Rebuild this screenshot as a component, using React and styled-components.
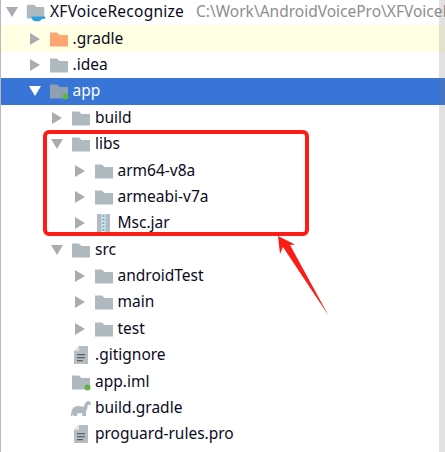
import styled, { createGlobalStyle } from "styled-components";

const GlobalStyle = createGlobalStyle`
  html, body {
    margin: 0;
    padding: 0;
    background: #fff;
    overflow: hidden;
  }
`;

const Panel = styled.div`
  position: relative;
  width: 445px;
  height: 452px;
  overflow: hidden;
  background: #fff;
  border-left: 1px solid #b9b9b9;
  box-sizing: border-box;
  font-family: "Noto Sans", "Open Sans", sans-serif;
  font-size: 15.5px;
  color: #0a0a1e;
`;

const Tree = styled.div`
  margin-top: -1px;
`;

const Row = styled.div`
  display: flex;
  align-items: center;
  height: 26.4px;
  padding-left: ${(p) => 4 + p.$depth * 22.5}px;
  white-space: nowrap;
  background: ${(p) => (p.$selected ? "#3875d7" : p.$ignored ? "#ffffe4" : "transparent")};
  color: ${(p) => (p.$selected ? "#fff" : "inherit")};
`;

const Toggle = styled.span`
  display: flex;
  justify-content: center;
  width: 14px;
  flex: none;
`;

const IconSlot = styled.span`
  display: flex;
  justify-content: center;
  width: 22px;
  margin-left: 6px;
  flex: none;
`;

const Name = styled.span`
  margin-left: 3px;
  line-height: 26px;
  position: relative;
  top: -1px;
  letter-spacing: ${(p) => (p.$root ? "0.25px" : "0")};
`;

const Path = styled.span`
  margin-left: 12px;
  color: #8e8e8e;
  position: relative;
  top: -1px;
`;

const Scrollbar = styled.div`
  position: absolute;
  top: 0;
  right: 0;
  width: 6px;
  height: 100%;
  background: rgba(120, 120, 120, 0.22);
`;

const Highlight = styled.div`
  position: absolute;
  left: 42px;
  top: 130px;
  width: 266px;
  height: 106px;
  box-sizing: border-box;
  border: 4px solid #fb1c16;
  border-radius: 6px;
`;

const ArrowMark = styled.svg`
  position: absolute;
  left: 268px;
  top: 230px;
`;

const Arrow = ({ open, selected }) => (
  <svg width="14" height="14" viewBox="0 0 14 14">
    <path
      d={open ? "M1 2h12L7 12z" : "M2 1l10 6-10 6z"}
      fill={selected ? "#fff" : "#a9adb1"}
    />
  </svg>
);

const Folder = ({ color = "#aeb9c0", module }) => (
  <svg width="22" height="18" viewBox="0 0 22 18">
    <path d="M2 2.500h7l2.500 2.500H20v11.500H2z" fill={color} />
    {module && <circle cx="17.500" cy="14.500" r="3" fill="#62b543" />}
  </svg>
);

const ProjectFolder = () => (
  <svg width="24" height="24" viewBox="0 0 24 24">
    <path d="M2 4h8l2.500 2.500H21V19H2z" fill="#aeb9c0" />
    <path d="M7 17h12c0 3-2 5-4 5h-4c-2 0-4-2-4-5z" fill="#2f9fdc" />
    <path d="M18 17h4v2.500h-4z" fill="#2f9fdc" />
  </svg>
);

const JarFile = () => (
  <svg width="13" height="18" viewBox="0 0 13 18">
    <path d="M0 0h13v18H0z" fill="#b4bcc2" />
    <path d="M4.500 0h4v18h-4z" fill="#dfe6ea" />
    <path d="M5.500 1h2v2h-2zm0 3.500h2v2h-2zm0 3.500h2v2h-2zm0 3.500h2v2h-2zm0 3.500h2v2h-2z" fill="#53b9e0" />
  </svg>
);

const TextFile = () => (
  <svg width="14" height="18" viewBox="0 0 14 18">
    <path d="M5 0h9v18H0V5z" fill="#b5bdc2" />
    <path d="M5 0v5H0z" fill="#dfe3e6" />
    <path d="M3 8h8v1.300H3zm0 3h8v1.300H3zm0 3h6v1.300H3z" fill="#5d6266" />
  </svg>
);

const Elephant = () => (
  <svg width="22" height="18" viewBox="0 0 22 18">
    <path
      d="M1 17c0-6 2-10 7-10 3 0 4 1 6 .5.500-3 2-5.500 4-5.500 2.500 0 3.500 2.500 2.500 4.500-1-1.500-2.500-1-3 1 0 2-.5 3.500-1.500 4.500v5h-3.500l-.5-3c-1.500.5-3 .5-4.500 0l-.5 3H3.500l-.5-2-1 2z"
      fill="#aeb9c0"
    />
  </svg>
);

const rows = [
  { depth: 0, arrow: "open", name: "XFVoiceRecognize", icon: <ProjectFolder />, path: "C:\\Work\\AndroidVoicePro\\XFVoiceRecognize", root: true },
  { depth: 1, arrow: "closed", name: ".gradle", icon: <Folder color="#fda672" />, ignored: true },
  { depth: 1, arrow: "closed", name: ".idea", icon: <Folder /> },
  { depth: 1, arrow: "open", name: "app", icon: <Folder color="#8fa0b2" module />, selected: true },
  { depth: 2, arrow: "closed", name: "build", icon: <Folder /> },
  { depth: 2, arrow: "open", name: "libs", icon: <Folder /> },
  { depth: 3, arrow: "closed", name: "arm64-v8a", icon: <Folder /> },
  { depth: 3, arrow: "closed", name: "armeabi-v7a", icon: <Folder /> },
  { depth: 3, arrow: "closed", name: "Msc.jar", icon: <JarFile /> },
  { depth: 2, arrow: "open", name: "src", icon: <Folder /> },
  { depth: 3, arrow: "closed", name: "androidTest", icon: <Folder /> },
  { depth: 3, arrow: "closed", name: "main", icon: <Folder /> },
  { depth: 3, arrow: "closed", name: "test", icon: <Folder /> },
  { depth: 2, name: ".gitignore", icon: <TextFile /> },
  { depth: 2, name: "app.iml", icon: <Folder module /> },
  { depth: 2, name: "build.gradle", icon: <Elephant /> },
  { depth: 2, name: "proguard-rules.pro", icon: <TextFile /> },
];

const App = () => (
  <>
    <GlobalStyle />
    <Panel>
      <Tree>
        {rows.map((row) => (
          <Row key={row.name} $depth={row.depth} $selected={row.selected} $ignored={row.ignored}>
            <Toggle>{row.arrow && <Arrow open={row.arrow === "open"} selected={row.selected} />}</Toggle>
            <IconSlot>{row.icon}</IconSlot>
            <Name $root={row.root}>{row.name}</Name>
            {row.path && <Path>{row.path}</Path>}
          </Row>
        ))}
      </Tree>
      <Scrollbar />
      <Highlight />
      <ArrowMark width="70" height="90" viewBox="269 230 70 90">
        <path d="M278 236l17 8.500-5 .5 38.500 70.500L283 247l-3 7z" fill="#fb1c16" />
      </ArrowMark>
    </Panel>
  </>
);

export default App;
